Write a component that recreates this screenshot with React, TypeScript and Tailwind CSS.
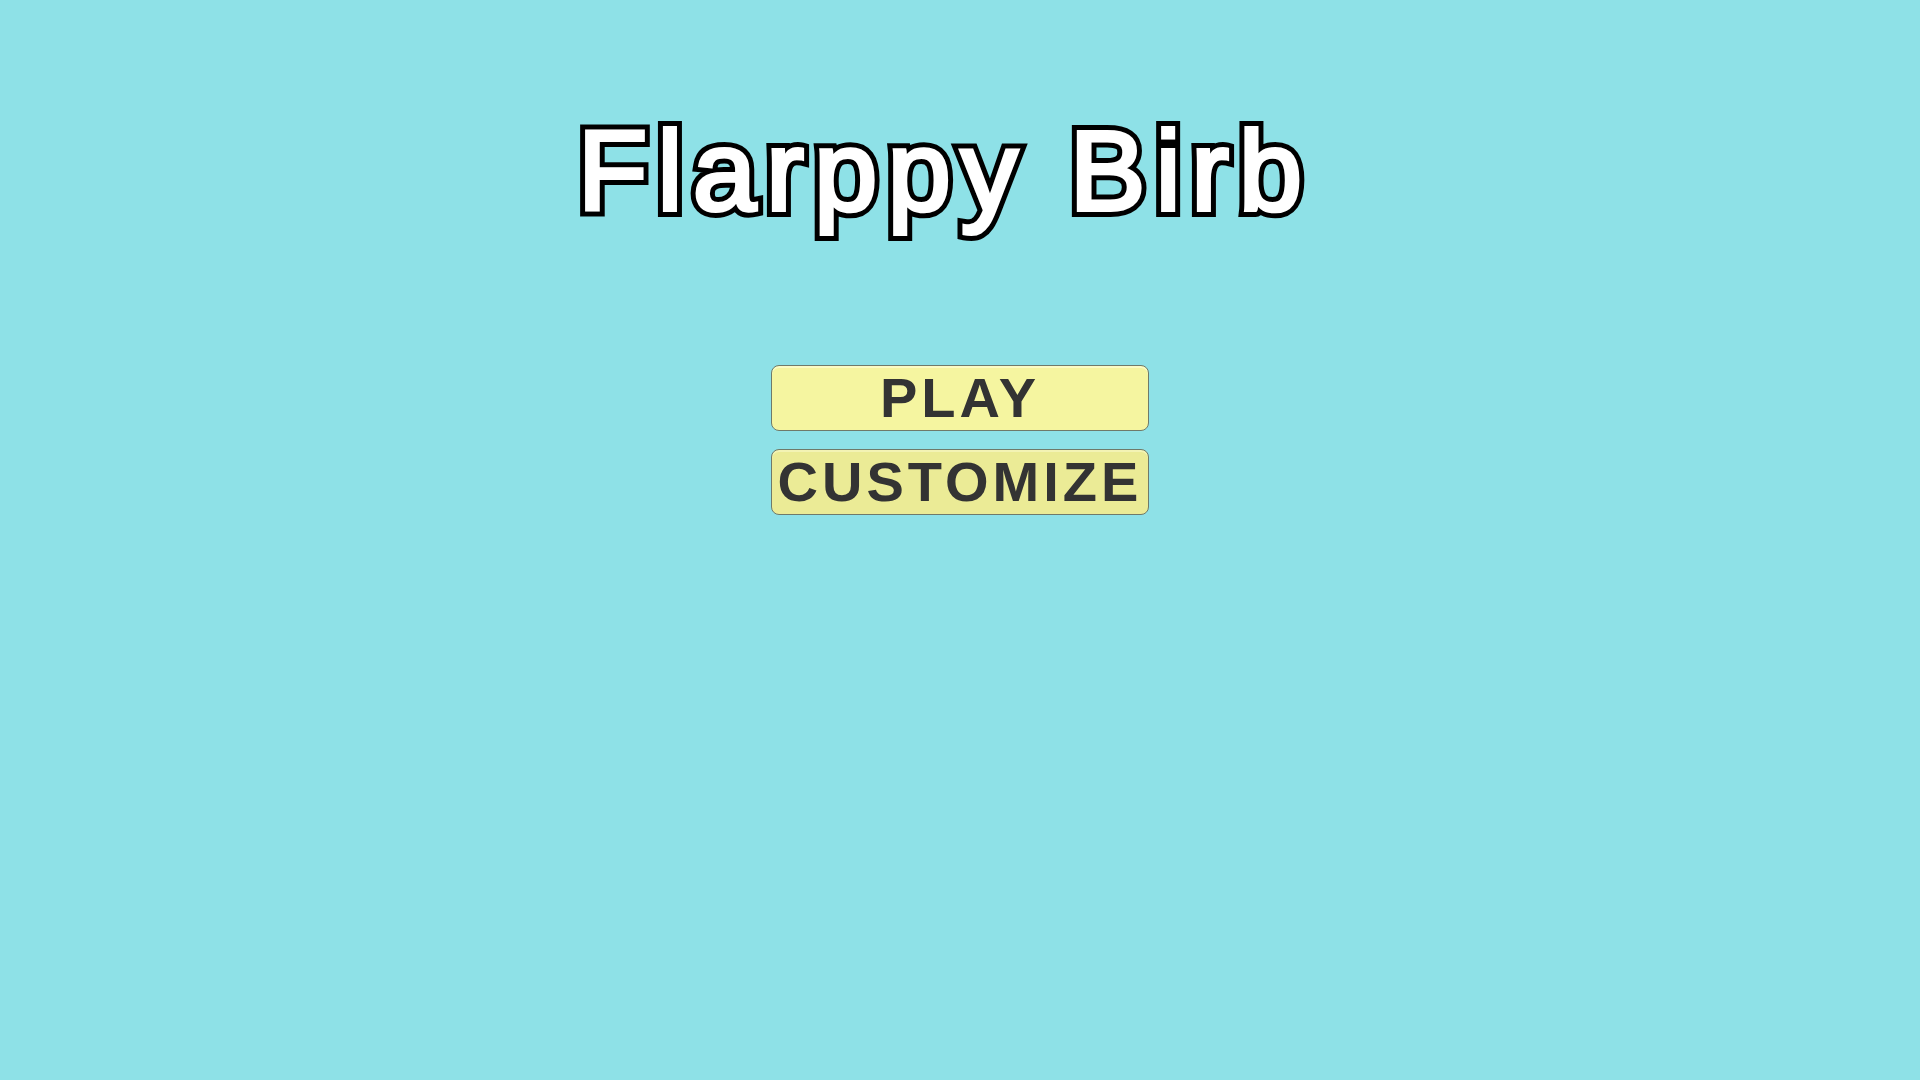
const titleText = 'Flarppy Birb'

export default function App() {
  return (
    <div className="min-h-screen w-full bg-[#8ee1e7] flex flex-col items-center font-['Liberation_Sans',Arial,sans-serif]">
      {/* two stacked copies: black outline underneath, slightly fattened white glyphs on top */}
      <h1 className="mt-[96px] grid text-[114px] leading-[150px] tracking-[10px] pl-[10px] mr-[40px]">
        <span className="col-start-1 row-start-1 text-black [-webkit-text-stroke:14px_#000] [paint-order:stroke_fill] [stroke-linejoin:round]">
          {titleText}
        </span>
        <span className="col-start-1 row-start-1 text-white [-webkit-text-stroke:4px_#fff] [paint-order:stroke_fill] [stroke-linejoin:round]">
          {titleText}
        </span>
      </h1>

      <div className="mt-[119px] flex flex-col gap-[18px]">
        <button className="w-[378px] h-[66px] rounded-[8px] border border-[#6f7a6a] bg-[#f5f5a0] shadow-[inset_0_2px_0_#fbfbc4] text-[56px] leading-none font-bold tracking-[4px] text-[#333] flex items-center justify-center">
          PLAY
        </button>
        <button className="w-[378px] h-[66px] rounded-[8px] border border-[#6f7a6a] bg-[#ebeb96] shadow-[inset_0_2px_0_#f3f3b4] text-[56px] leading-none font-bold tracking-[4px] text-[#333] flex items-center justify-center">
          CUSTOMIZE
        </button>
      </div>
    </div>
  )
}
